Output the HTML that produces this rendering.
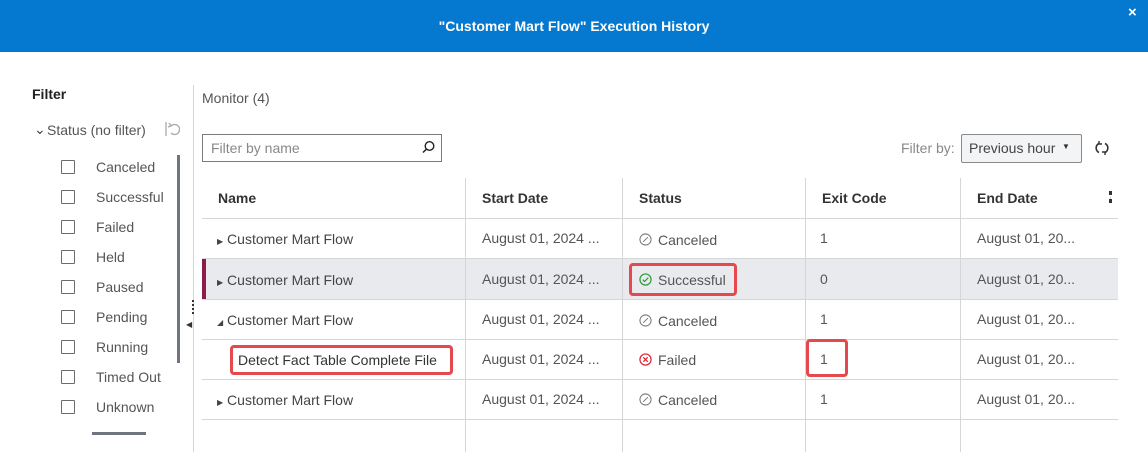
<!DOCTYPE html>
<html><head><style>
*{margin:0;padding:0;box-sizing:border-box}
body{width:1148px;height:452px;position:relative;background:#fff;font-family:"Liberation Sans",sans-serif;color:#3d3d3d;overflow:hidden;font-size:14px}
.a{position:absolute;white-space:nowrap}
.hdr{left:0;top:0;width:1148px;height:52px;background:#0479cf}
.cb{width:14px;height:14px;border:1px solid #6b6b6b;border-radius:1px;background:#fff}
.vl{width:1px;background:#d6d6d6}
.hl{height:1px;background:#d6d6d6}
.rb{border:3px solid #e5484d;border-radius:4px}
.ic{width:13px;height:13px}
</style></head><body>
<div class="a hdr"></div>
<div class="a" style="left:0;top:18px;width:1148px;text-align:center;color:#fff;font-weight:bold;font-size:14px">"Customer Mart Flow" Execution History</div>
<div class="a" style="left:1128px;top:4px;color:#fff;font-size:15px;font-weight:bold">×</div>

<div class="a" style="left:32px;top:86px;font-weight:bold;color:#222">Filter</div>
<div class="a" style="left:34px;top:121px;color:#444">⌄</div>
<div class="a" style="left:47px;top:122px;color:#555">Status (no filter)</div>
<svg class="a" style="left:164px;top:121px" width="16" height="16" viewBox="0 0 16 16"><path d="M2 1v14" stroke="#aaa" stroke-width="1.3"/><path d="M7 5a5 5 0 1 1 0 7" fill="none" stroke="#aaa" stroke-width="1.3"/><path d="M5 2l2 3-3 1" fill="none" stroke="#aaa" stroke-width="1.3"/></svg>
<div class="a" style="left:177px;top:155px;width:3px;height:208px;background:#6e7480"></div>
<div class="a" style="left:92px;top:432px;width:54px;height:3px;background:#6e7480"></div>
<div class="a" style="left:61px;top:152px;line-height:30px">
<div style="display:flex;align-items:center;height:30px"><span class="cb"></span><span style="margin-left:21px;color:#555">Canceled</span></div>
<div style="display:flex;align-items:center;height:30px"><span class="cb"></span><span style="margin-left:21px;color:#555">Successful</span></div>
<div style="display:flex;align-items:center;height:30px"><span class="cb"></span><span style="margin-left:21px;color:#555">Failed</span></div>
<div style="display:flex;align-items:center;height:30px"><span class="cb"></span><span style="margin-left:21px;color:#555">Held</span></div>
<div style="display:flex;align-items:center;height:30px"><span class="cb"></span><span style="margin-left:21px;color:#555">Paused</span></div>
<div style="display:flex;align-items:center;height:30px"><span class="cb"></span><span style="margin-left:21px;color:#555">Pending</span></div>
<div style="display:flex;align-items:center;height:30px"><span class="cb"></span><span style="margin-left:21px;color:#555">Running</span></div>
<div style="display:flex;align-items:center;height:30px"><span class="cb"></span><span style="margin-left:21px;color:#555">Timed Out</span></div>
<div style="display:flex;align-items:center;height:30px"><span class="cb"></span><span style="margin-left:21px;color:#555">Unknown</span></div>
</div>
<div class="a vl" style="left:193px;top:85px;height:367px"></div>
<div class="a" style="left:192px;top:300px;width:2px;height:14px;border-left:2px dotted #333"></div>
<div class="a" style="left:186px;top:320px;font-size:8px;color:#333">◀</div>

<div class="a" style="left:202px;top:90px;color:#555">Monitor (4)</div>
<div class="a" style="left:202px;top:134px;width:240px;height:28px;border:1px solid #7a7a7a"></div>
<div class="a" style="left:211px;top:140px;color:#888">Filter by name</div>
<svg class="a" style="left:421px;top:140px" width="15" height="15" viewBox="0 0 15 15"><circle cx="8.5" cy="6" r="4.3" fill="none" stroke="#222" stroke-width="1.4"/><path d="M5.5 9L2 12.5" stroke="#222" stroke-width="1.5"/></svg>
<div class="a" style="left:901px;top:140px;color:#888">Filter by:</div>
<div class="a" style="left:961px;top:134px;width:121px;height:29px;border:1px solid #8a8a8a;border-radius:2px;background:#f3f4f6"></div>
<div class="a" style="left:969px;top:140px;color:#444">Previous hour</div>
<div class="a" style="left:1062px;top:142px;font-size:8px;color:#333">▼</div>
<svg class="a" style="left:1094px;top:140px" width="16" height="16" viewBox="0 0 16 16"><path d="M11 3.5a5 5 0 0 1 0 9" fill="none" stroke="#333" stroke-width="1.6"/><path d="M5 12.5a5 5 0 0 1 0-9" fill="none" stroke="#333" stroke-width="1.6"/><path d="M5 1v3h3M11 15v-3H8" fill="none" stroke="#333" stroke-width="1.4"/></svg>

<div class="a" style="left:202px;top:259px;width:916px;height:40px;background:#e9eaee"></div>
<div class="a" style="left:202px;top:259px;width:4px;height:40px;background:#8d1c4c"></div>
<div class="a hl" style="left:202px;top:218px;width:916px"></div>
<div class="a hl" style="left:202px;top:258px;width:916px"></div>
<div class="a hl" style="left:202px;top:299px;width:916px"></div>
<div class="a hl" style="left:202px;top:339px;width:916px"></div>
<div class="a hl" style="left:202px;top:379px;width:916px"></div>
<div class="a hl" style="left:202px;top:419px;width:916px"></div>
<div class="a vl" style="left:465px;top:178px;height:274px"></div>
<div class="a vl" style="left:622px;top:178px;height:274px"></div>
<div class="a vl" style="left:805px;top:178px;height:274px"></div>
<div class="a vl" style="left:960px;top:178px;height:274px"></div>

<div class="a" style="left:218px;top:190px;font-weight:bold;color:#333">Name</div>
<div class="a" style="left:482px;top:190px;font-weight:bold;color:#333">Start Date</div>
<div class="a" style="left:639px;top:190px;font-weight:bold;color:#333">Status</div>
<div class="a" style="left:822px;top:190px;font-weight:bold;color:#333">Exit Code</div>
<div class="a" style="left:977px;top:190px;font-weight:bold;color:#333">End Date</div>
<div class="a" style="left:1109px;top:191px;width:3px;height:12px;border-left:3px dotted #333"></div>

<div class="a" style="left:217px;top:231px;color:#444"><span style="font-size:8px">▶</span> Customer Mart Flow</div>
<div class="a" style="left:217px;top:272px;color:#444"><span style="font-size:8px">▶</span> Customer Mart Flow</div>
<div class="a" style="left:217px;top:312px;color:#444"><span style="font-size:8px">◢</span> Customer Mart Flow</div>
<div class="a" style="left:238px;top:352px;color:#333">Detect Fact Table Complete File</div>
<div class="a" style="left:217px;top:392px;color:#444"><span style="font-size:8px">▶</span> Customer Mart Flow</div>

<div class="a" style="left:482px;top:230px;color:#555">August 01, 2024 ...</div>
<div class="a" style="left:482px;top:271px;color:#555">August 01, 2024 ...</div>
<div class="a" style="left:482px;top:311px;color:#555">August 01, 2024 ...</div>
<div class="a" style="left:482px;top:351px;color:#555">August 01, 2024 ...</div>
<div class="a" style="left:482px;top:391px;color:#555">August 01, 2024 ...</div>

<svg class="a ic" style="left:639px;top:233px" viewBox="0 0 14 14"><circle cx="7" cy="7" r="6" fill="none" stroke="#777" stroke-width="1.1"/><path d="M4.5 9.5l5-5" stroke="#777" stroke-width="1.1"/></svg>
<div class="a" style="left:658px;top:232px;color:#555">Canceled</div>
<svg class="a ic" style="left:639px;top:273px" viewBox="0 0 14 14"><circle cx="7" cy="7" r="6" fill="none" stroke="#2b9a3a" stroke-width="1.3"/><path d="M4 7.2l2 2 4-4.2" fill="none" stroke="#2b9a3a" stroke-width="1.3"/></svg>
<div class="a" style="left:658px;top:272px;color:#555">Successful</div>
<svg class="a ic" style="left:639px;top:314px" viewBox="0 0 14 14"><circle cx="7" cy="7" r="6" fill="none" stroke="#777" stroke-width="1.1"/><path d="M4.5 9.5l5-5" stroke="#777" stroke-width="1.1"/></svg>
<div class="a" style="left:658px;top:313px;color:#555">Canceled</div>
<svg class="a ic" style="left:639px;top:353px" viewBox="0 0 14 14"><circle cx="7" cy="7" r="6" fill="none" stroke="#d9232e" stroke-width="1.3"/><path d="M4.6 4.6l4.8 4.8M9.4 4.6l-4.8 4.8" stroke="#d9232e" stroke-width="1.3"/></svg>
<div class="a" style="left:658px;top:352px;color:#555">Failed</div>
<svg class="a ic" style="left:639px;top:393px" viewBox="0 0 14 14"><circle cx="7" cy="7" r="6" fill="none" stroke="#777" stroke-width="1.1"/><path d="M4.5 9.5l5-5" stroke="#777" stroke-width="1.1"/></svg>
<div class="a" style="left:658px;top:392px;color:#555">Canceled</div>

<div class="a" style="left:820px;top:230px;color:#555">1</div>
<div class="a" style="left:820px;top:271px;color:#555">0</div>
<div class="a" style="left:820px;top:311px;color:#555">1</div>
<div class="a" style="left:820px;top:351px;color:#555">1</div>
<div class="a" style="left:820px;top:391px;color:#555">1</div>

<div class="a" style="left:977px;top:230px;color:#555">August 01, 20...</div>
<div class="a" style="left:977px;top:271px;color:#555">August 01, 20...</div>
<div class="a" style="left:977px;top:311px;color:#555">August 01, 20...</div>
<div class="a" style="left:977px;top:351px;color:#555">August 01, 20...</div>
<div class="a" style="left:977px;top:391px;color:#555">August 01, 20...</div>

<div class="a rb" style="left:629px;top:263px;width:108px;height:33px"></div>
<div class="a rb" style="left:230px;top:345px;width:223px;height:30px"></div>
<div class="a rb" style="left:806px;top:339px;width:42px;height:38px"></div>
</body></html>
